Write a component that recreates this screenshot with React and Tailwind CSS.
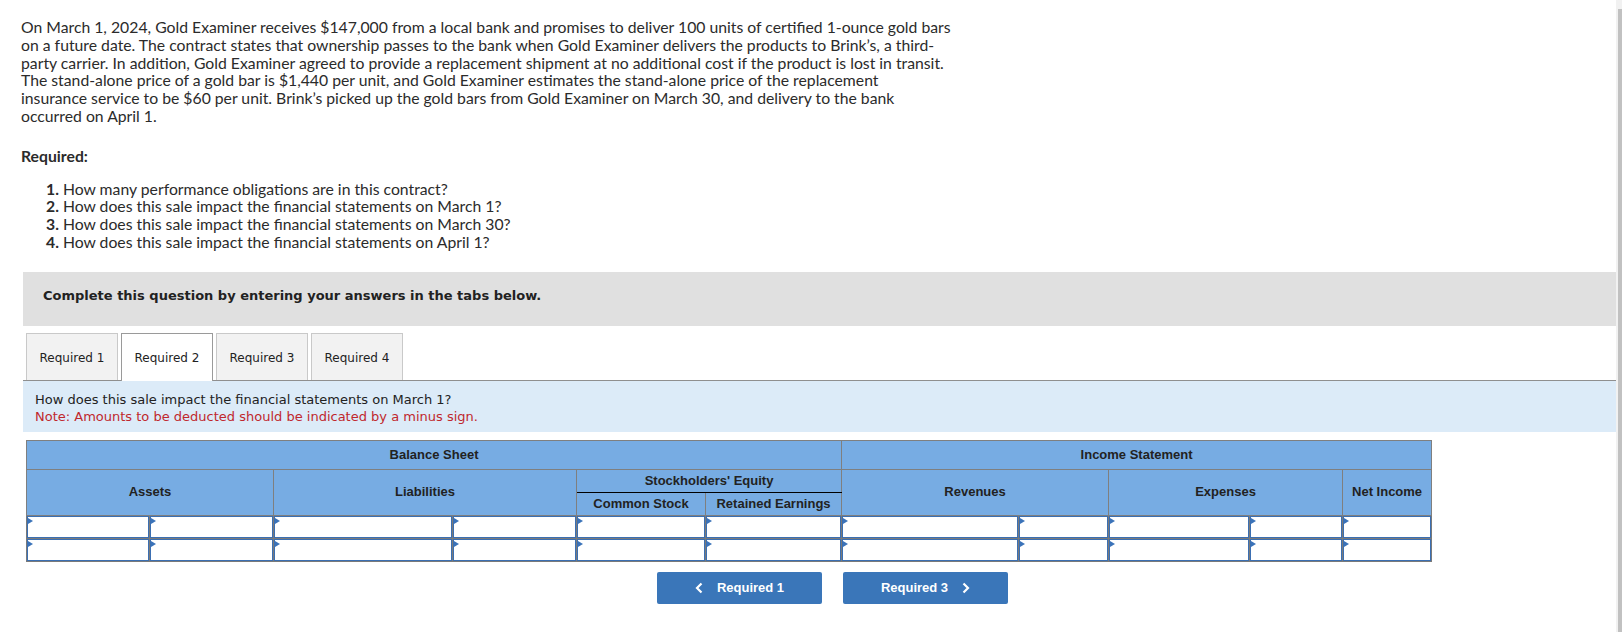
import React from 'react'

const QUESTIONS = [
  'How many performance obligations are in this contract?',
  'How does this sale impact the financial statements on March 1?',
  'How does this sale impact the financial statements on March 30?',
  'How does this sale impact the financial statements on April 1?',
]

const TABS = ['Required 1', 'Required 2', 'Required 3', 'Required 4']

// widths of the 11 input columns, left to right
const COLS = [123, 124, 179, 124, 129, 136, 177, 90, 141, 93, 89]

function Cell() {
  return (
    <td className="border border-[#7a7a7a] p-0">
      <div className="relative h-[22px] border border-[#3b6fb2] bg-white">
        <span className="absolute left-0 top-[1px] w-0 h-0 border-y-[3px] border-y-transparent border-l-[5px] border-l-[#3b73b9]" />
      </div>
    </td>
  )
}

function Tab({ label, active }) {
  return (
    <div
      className={
        active
          ? 'w-[92px] h-[48px] flex items-center justify-center pt-[2px] bg-white border border-b-0 border-[#9a9a9a] -mb-px'
          : 'w-[92px] h-[47px] flex items-center justify-center pt-[2px] bg-[#f2f2f2] border border-b-0 border-[#c9c9c9]'
      }
    >
      {label}
    </div>
  )
}

export default function App() {
  const th = 'border border-[#7f7f7f] bg-[#77ace3] font-bold text-[13px] text-[#222] text-center font-["Liberation_Sans",Arial,sans-serif] p-0'

  return (
    <div className="flex w-[1622px] h-[632px] overflow-hidden bg-white">
      <div className="flex-1 pl-[21px] pt-[18px] text-[#2b2b2b] font-['Lato','Liberation_Sans',sans-serif]">
        <p className="text-[15.75px] leading-[17.8px]">
          On March 1, 2024, Gold Examiner receives $147,000 from a local bank and promises to deliver 100 units of certified 1-ounce gold bars<br />
          on a future date. The contract states that ownership passes to the bank when Gold Examiner delivers the products to Brink’s, a third-<br />
          party carrier. In addition, Gold Examiner agreed to provide a replacement shipment at no additional cost if the product is lost in transit.<br />
          The stand-alone price of a gold bar is $1,440 per unit, and Gold Examiner estimates the stand-alone price of the replacement<br />
          insurance service to be $60 per unit. Brink’s picked up the gold bars from Gold Examiner on March 30, and delivery to the bank<br />
          occurred on April 1.
        </p>

        <p className="mt-[22px] text-[15.75px] leading-[18px] font-bold">Required:</p>

        <ol className="mt-[15px] pl-[25px] text-[15.75px] leading-[17.7px]">
          {QUESTIONS.map((q, i) => (
            <li key={i}>
              <span className="font-bold">{i + 1}.</span> {q}
            </li>
          ))}
        </ol>

        <div className="ml-[2px] mt-[21px] font-['DejaVu_Sans',Verdana,sans-serif] text-[12px] text-[#222]">
          <div className="h-[54px] bg-[#e0e0e0] pl-[20px] pt-[16px] text-[13px] leading-[16px] font-bold">
            Complete this question by entering your answers in the tabs below.
          </div>

          <div className="mt-[7px] flex gap-[3px] pl-[3px] border-b border-[#8f8f8f]">
            {TABS.map((t, i) => (
              <Tab key={t} label={t} active={i === 1} />
            ))}
          </div>

          <div className="h-[51px] bg-[#dcebf8] pl-[12px] pt-[10px] text-[13px] leading-[17px]">
            <div>How does this sale impact the financial statements on March 1?</div>
            <div className="text-[#c0282d]">Note: Amounts to be deducted should be indicated by a minus sign.</div>
          </div>

          <table className="mt-[8px] ml-[3px] table-fixed border-collapse w-[1405px]">
            <colgroup>
              {COLS.map((w, i) => (
                <col key={i} style={{ width: w }} />
              ))}
            </colgroup>
            <thead>
              <tr className="h-[29px]">
                <th colSpan={6} className={th}>Balance Sheet</th>
                <th colSpan={5} className={th}>Income Statement</th>
              </tr>
              <tr className="h-[23px]">
                <th colSpan={2} rowSpan={2} className={th}>Assets</th>
                <th colSpan={2} rowSpan={2} className={th}>Liabilities</th>
                <th colSpan={2} className={th + ' border-b-black'}>Stockholders' Equity</th>
                <th colSpan={2} rowSpan={2} className={th}>Revenues</th>
                <th colSpan={2} rowSpan={2} className={th}>Expenses</th>
                <th rowSpan={2} className={th}>Net Income</th>
              </tr>
              <tr className="h-[23px]">
                <th className={th + ' border-t-black'}>Common Stock</th>
                <th className={th + ' border-t-black'}>Retained Earnings</th>
              </tr>
            </thead>
            <tbody>
              {[0, 1].map(r => (
                <tr key={r}>
                  {COLS.map((_, i) => (
                    <Cell key={i} />
                  ))}
                </tr>
              ))}
            </tbody>
          </table>

          <div className="mt-[10px] flex gap-[21px] pl-[634px] font-['Liberation_Sans',Arial,sans-serif] text-[13px] font-bold text-white">
            <button className="w-[165px] h-[32px] rounded-[2px] bg-[#3a76b9] flex items-center justify-center gap-[14px]">
              <svg width="8" height="12" viewBox="0 0 8 12" fill="none" stroke="white" strokeWidth="2.2">
                <path d="M6.5 1.5 2 6l4.5 4.5" />
              </svg>
              <span>Required 1</span>
            </button>
            <button className="w-[165px] h-[32px] rounded-[2px] bg-[#3a76b9] flex items-center justify-center gap-[14px]">
              <span>Required 3</span>
              <svg width="8" height="12" viewBox="0 0 8 12" fill="none" stroke="white" strokeWidth="2.2">
                <path d="M1.5 1.5 6 6l-4.5 4.5" />
              </svg>
            </button>
          </div>
        </div>
      </div>

      <div className="w-[6px] h-full bg-[#f1f1f1] pt-[9px] pl-[2px]">
        <div className="h-full bg-[#c1c1c1]" />
      </div>
    </div>
  )
}
